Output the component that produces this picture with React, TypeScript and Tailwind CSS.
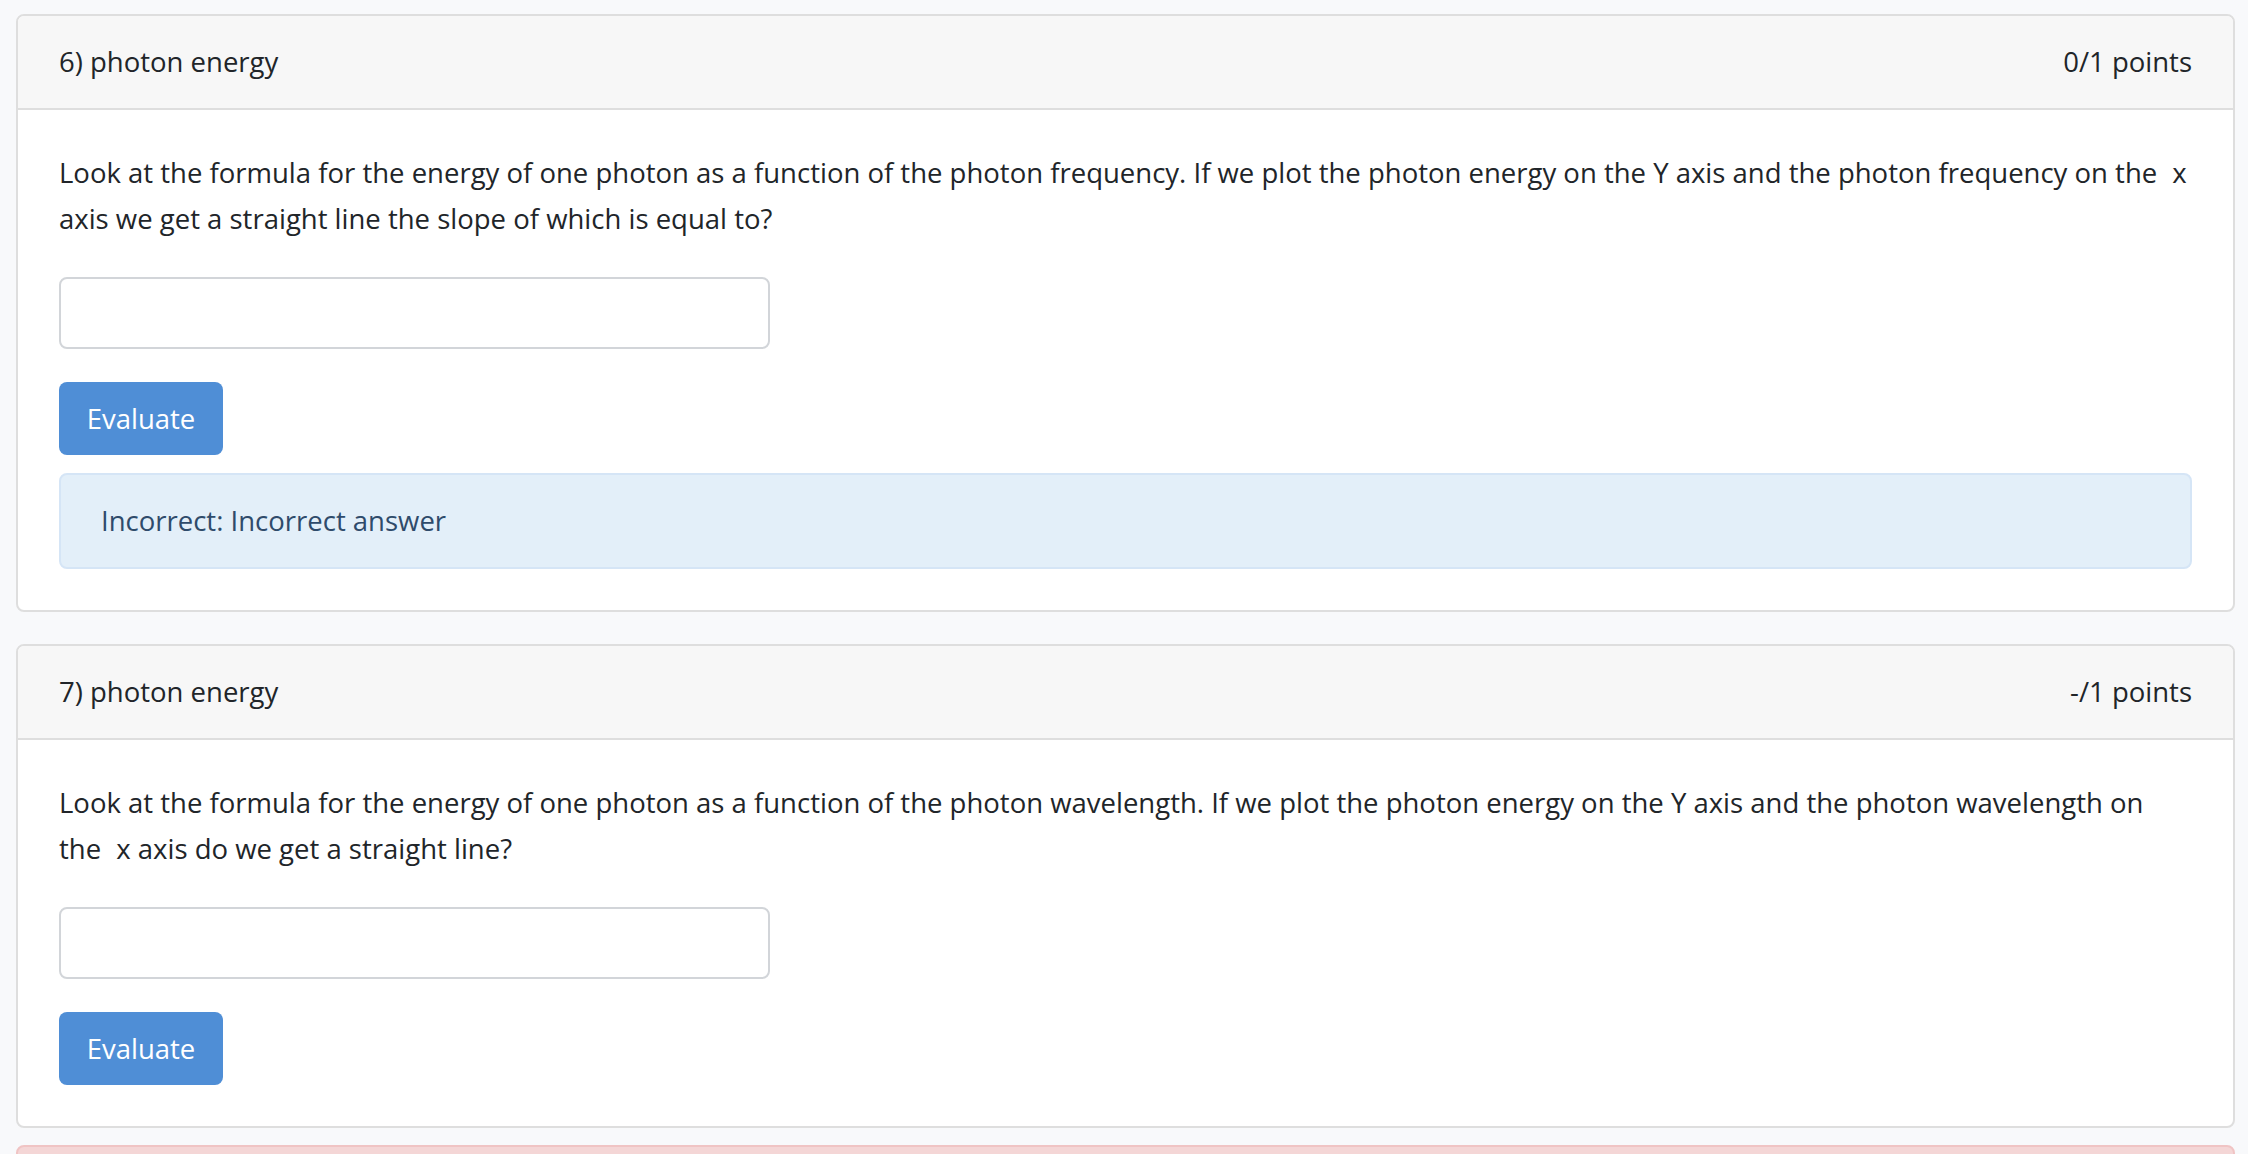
import React from "react";

function Card({
  num,
  points,
  line1,
  line2,
  feedback,
}: {
  num: string;
  points: string;
  line1: React.ReactNode;
  line2: React.ReactNode;
  feedback?: string;
}) {
  return (
    <div className="rounded-[8px] border-2 border-[#dedede] bg-white overflow-hidden">
      <div className="flex items-center justify-between h-[94px] px-[41px] bg-[#f7f7f7] border-b-2 border-[#dedede] text-[27.5px] text-[#212529]">
        <span>{num}) photon energy</span>
        <span>{points}</span>
      </div>
      <div className="px-[41px] pt-[40px] pb-[41px]">
        <p className="text-[27.5px] leading-[46px] text-[#212529]">
          {line1}
          <br />
          {line2}
        </p>
        <input
          type="text"
          className="block mt-[35px] w-[711px] h-[72px] rounded-[8px] border-2 border-[#d2d5d9] bg-white outline-none"
        />
        <button className="mt-[33px] flex items-center justify-center w-[164px] h-[73px] rounded-[8px] bg-[#4f8ed6] text-white text-[27.5px]">
          Evaluate
        </button>
        {feedback && (
          <div className="mt-[18px] h-[96px] flex items-center px-[40px] rounded-[8px] border-2 border-[#d5e5f6] bg-[#e3eff9] text-[#2f4b6b] text-[27.5px]">
            {feedback}
          </div>
        )}
      </div>
    </div>
  );
}

export default function App() {
  return (
    <div
      className="min-h-[1154px] bg-[#f8f9fb] pl-[16px] pr-[13px] pt-[14px]"
      style={{ fontFamily: "'Open Sans', Lato, sans-serif" }}
    >
      <Card
        num="6"
        points="0/1 points"
        line1={
          <>
            Look at the formula for the energy of one photon as a function of the photon frequency. If we plot the photon energy on the Y axis and the photon frequency on the{" "}
            <span className="ml-[8px]">x</span>
          </>
        }
        line2="axis we get a straight line the slope of which is equal to?"
        feedback="Incorrect: Incorrect answer"
      />
      <div className="mt-[32px]">
        <Card
          num="7"
          points="-/1 points"
          line1="Look at the formula for the energy of one photon as a function of the photon wavelength. If we plot the photon energy on the Y axis and the photon wavelength on"
          line2={
            <>
              the <span className="ml-[8px]">x</span> axis do we get a straight line?
            </>
          }
        />
      </div>
      <div className="mt-[17px] h-[40px] rounded-t-[8px] border-2 border-[#f0c4c4] bg-[#f4d6d6]" />
    </div>
  );
}
